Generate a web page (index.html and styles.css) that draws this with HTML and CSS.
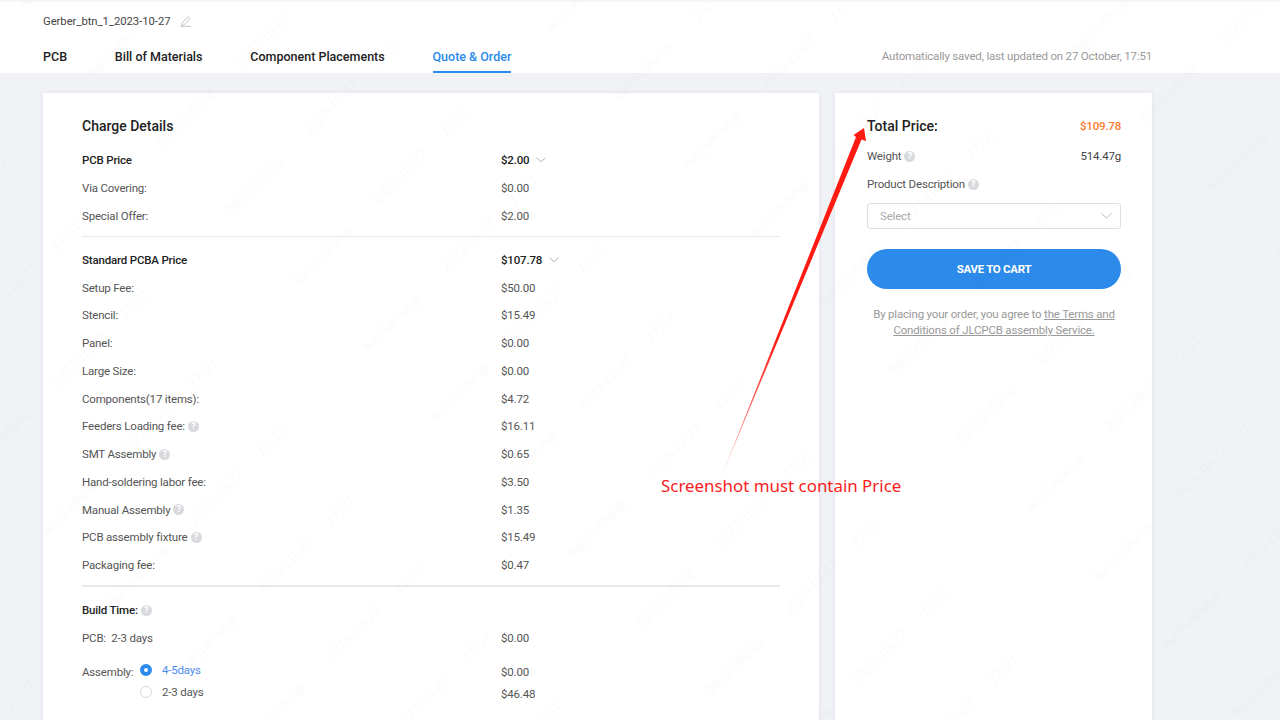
FILE: index.html

```html
<!DOCTYPE html>
<html lang="en">
<head>
    <meta charset="UTF-8">
    <meta name="viewport" content="width=device-width, initial-scale=1.0">
    <title>Quote &amp; Order</title>
    <link rel="stylesheet" href="styles.css">
</head>
<body>
    <header class="top">
        <div class="file-name">
            <span>Gerber_btn_1_2023-10-27</span>
            <svg class="pencil" width="12" height="12" viewBox="0 0 12 12" fill="none" stroke="#b5b8bd" stroke-width="0.8"><path d="M2 8.2 8 1.6l2 1.8-6 6.6-2.4.6zM.8 11.4h10"/></svg>
        </div>
        <div class="tab-row">
            <nav class="tabs">
                <a href="#pcb">PCB</a>
                <a href="#bom">Bill of Materials</a>
                <a href="#placements">Component Placements</a>
                <a href="#quote" class="active">Quote &amp; Order</a>
            </nav>
            <span class="saved">Automatically saved, last updated on 27 October, 17:51</span>
        </div>
    </header>

    <main class="content">
        <section class="card charge">
            <h2>Charge Details</h2>
            <div class="row head"><span class="label">PCB Price</span><span class="val">$2.00<svg class="chev" width="10" height="6" viewBox="0 0 11 6" fill="none" stroke="#a9adb3"><path d="M.5.5l5 4.5 5-4.5"/></svg></span></div>
            <div class="row"><span class="label">Via Covering:</span><span class="val">$0.00</span></div>
            <div class="row"><span class="label">Special Offer:</span><span class="val">$2.00</span></div>
            <hr>
            <div class="row head"><span class="label">Standard PCBA Price</span><span class="val">$107.78<svg class="chev" width="10" height="6" viewBox="0 0 11 6" fill="none" stroke="#a9adb3"><path d="M.5.5l5 4.5 5-4.5"/></svg></span></div>
            <div class="row"><span class="label">Setup Fee:</span><span class="val">$50.00</span></div>
            <div class="row"><span class="label">Stencil:</span><span class="val">$15.49</span></div>
            <div class="row"><span class="label">Panel:</span><span class="val">$0.00</span></div>
            <div class="row"><span class="label">Large Size:</span><span class="val">$0.00</span></div>
            <div class="row"><span class="label">Components(17 items):</span><span class="val">$4.72</span></div>
            <div class="row"><span class="label">Feeders Loading fee:<i class="help">?</i></span><span class="val">$16.11</span></div>
            <div class="row"><span class="label">SMT Assembly<i class="help">?</i></span><span class="val">$0.65</span></div>
            <div class="row"><span class="label">Hand-soldering labor fee:</span><span class="val">$3.50</span></div>
            <div class="row"><span class="label">Manual Assembly<i class="help">?</i></span><span class="val">$1.35</span></div>
            <div class="row"><span class="label">PCB assembly fixture<i class="help">?</i></span><span class="val">$15.49</span></div>
            <div class="row"><span class="label">Packaging fee:</span><span class="val">$0.47</span></div>
            <hr class="wide">
            <div class="row head"><span class="label">Build Time:<i class="help">?</i></span></div>
            <div class="row"><span class="label">PCB:&nbsp; 2-3 days</span><span class="val">$0.00</span></div>
            <div class="assembly">
                <span class="asm-label">Assembly:</span>
                <div class="asm-options">
                    <div class="asm-opt selected"><i class="radio"></i><span>4-5days</span></div>
                    <div class="asm-opt"><i class="radio"></i><span>2-3 days</span></div>
                </div>
                <div class="asm-prices">
                    <span>$0.00</span>
                    <span>$46.48</span>
                </div>
            </div>
        </section>

        <aside class="card summary">
            <div class="total"><span>Total Price:</span><b>$109.78</b></div>
            <div class="weight"><span class="label-inline">Weight<i class="help">?</i></span><span class="grams">514.47g</span></div>
            <div class="desc">Product Description<i class="help">?</i></div>
            <div class="select">
                <span>Select</span>
                <svg width="11" height="6" viewBox="0 0 11 6" fill="none" stroke="#b5b8bd"><path d="M.5.5l5 4.5 5-4.5"/></svg>
            </div>
            <button class="save">SAVE TO CART</button>
            <p class="terms">By placing your order, you agree to <a href="#terms">the Terms and<br>Conditions of JLCPCB assembly Service.</a></p>
        </aside>
    </main>

    <!-- watermark and annotation over the screenshot -->
    <svg class="arrow" width="1280" height="720" viewBox="0 0 1280 720">
        <defs>
            <pattern id="mark" width="356" height="97" patternUnits="userSpaceOnUse" patternTransform="rotate(-45)">
                <g class="mark-text">
                    <text x="48" y="24" text-anchor="middle">baojiashang</text>
                    <text x="158" y="24" text-anchor="middle">2023-10-27</text>
                    <text x="236" y="24" text-anchor="middle">17:51</text>
                </g>
            </pattern>
            <linearGradient id="fade" gradientUnits="userSpaceOnUse" x1="720" y1="480" x2="780" y2="340">
                <stop offset="0" stop-color="#ff1a12" stop-opacity="0.2"/>
                <stop offset="1" stop-color="#ff1a12"/>
            </linearGradient>
        </defs>
        <rect width="1280" height="720" fill="url(#mark)"/>
        <path fill="url(#fade)" d="M720 480 856 137 853.5 135 864 128 866 141 861.5 139.5Z"/>
    </svg>
    <span class="note">Screenshot must contain Price</span>
</body>
</html>
```

FILE: styles.css

```css
* { margin: 0; padding: 0; box-sizing: border-box; }
html, body { height: 720px; overflow: hidden; }
body { font-family: Roboto, Arial, sans-serif; font-size: 11.5px; letter-spacing: -0.18px; background: #f0f2f6; color: #555; position: relative; }

.top { background: #fff; height: 73px; border-top: 2px solid #f5f6f8; padding: 0 128px 0 43px; }
.file-name { display: flex; align-items: center; gap: 9px; height: 37px; padding-top: 1px; font-size: 11.3px; letter-spacing: -0.05px; color: #444; }
.pencil { margin-left: 1px; }
.tab-row { display: flex; justify-content: space-between; align-items: center; height: 34px; }
.tabs { display: flex; gap: 47.8px; }
.tabs a { display: block; height: 34px; line-height: 36px; font-size: 12.5px; font-weight: 500; letter-spacing: 0; color: #222; text-decoration: none; }
.tabs a.active { color: #2b8aea; border-bottom: 2px solid #2b8aea; }
.saved { color: #999; }

.content { display: flex; gap: 16px; padding: 20px 128px 0 43px; }
.card { background: #fff; height: 660px; box-shadow: 0 0 4px rgba(190, 195, 210, 0.35); }

.charge { width: 776px; padding: 23px 39px 0; }
.charge h2 { font-size: 14px; font-weight: 500; letter-spacing: 0; color: #222; line-height: 20px; margin-bottom: 10.2px; }
.row { display: flex; height: 27.75px; align-items: center; }
.label { width: 419px; flex: none; display: flex; align-items: center; }
.val { display: flex; align-items: center; gap: 7px; }
.head { font-weight: 500; color: #222; }
.charge hr { border: none; border-top: 1px solid #e8e9ec; margin: 6.5px 0 9px; }
.charge hr.wide { margin: 6.3px 0 9px; border-top-width: 2px; }

.help { display: inline-block; width: 11px; height: 11px; margin-left: 3px; border-radius: 50%; background: #d8dadd; color: #fff; font-size: 9px; font-style: normal; font-weight: 700; letter-spacing: 0; line-height: 11px; text-align: center; }

.assembly { display: flex; margin-top: 6px; }
.asm-label { width: 57px; padding-top: 7px; flex: none; }
.asm-options { width: 362px; flex: none; display: flex; flex-direction: column; gap: 8px; padding-top: 5px; }
.asm-opt { display: flex; align-items: center; gap: 10px; height: 14px; }
.asm-opt.selected { color: #4c8df0; }
.radio { width: 12px; height: 12px; border-radius: 50%; border: 1px solid #d9d9d9; background: #fff; margin-left: 1px; }
.selected .radio { border: 4px solid #2b8aea; }
.asm-prices { display: flex; flex-direction: column; gap: 8px; padding-top: 7px; }
.asm-prices span { height: 14px; line-height: 14px; }

.summary { width: 317px; padding: 23px 31px 0 32px; }
.total { display: flex; justify-content: space-between; align-items: center; height: 20px; font-size: 14px; font-weight: 500; letter-spacing: 0; color: #222; }
.total b { font-size: 11.5px; font-weight: 500; letter-spacing: -0.2px; color: #ff7a2a; }
.weight { display: flex; justify-content: space-between; align-items: center; margin-top: 10px; height: 20px; }
.label-inline { display: flex; align-items: center; }
.grams { color: #444; }
.desc { display: flex; align-items: center; margin-top: 8px; height: 20px; }
.select { display: flex; justify-content: space-between; align-items: center; margin-top: 9px; height: 26px; padding: 0 8px 0 12px; border: 1px solid #dcdfe3; border-radius: 3px; color: #aaa; }
.save { display: block; width: 100%; height: 40px; margin-top: 20px; border: none; border-radius: 20px; background: #2b8aea; color: #fff; font-family: inherit; font-size: 11.5px; font-weight: 700; letter-spacing: -0.3px; }
.terms { margin-top: 17px; line-height: 16px; text-align: center; color: #999; }
.terms a { color: #999; }

.arrow { position: absolute; top: 0; left: 0; pointer-events: none; }
.mark-text { font-family: "Liberation Serif", serif; font-size: 14px; font-style: italic; letter-spacing: 0.5px; fill: #000; opacity: 0.025; }
.note { position: absolute; left: 661px; top: 474px; font-family: "Noto Sans", sans-serif; font-size: 16.9px; letter-spacing: 0; line-height: 24px; color: #fa1e1e; }
```
